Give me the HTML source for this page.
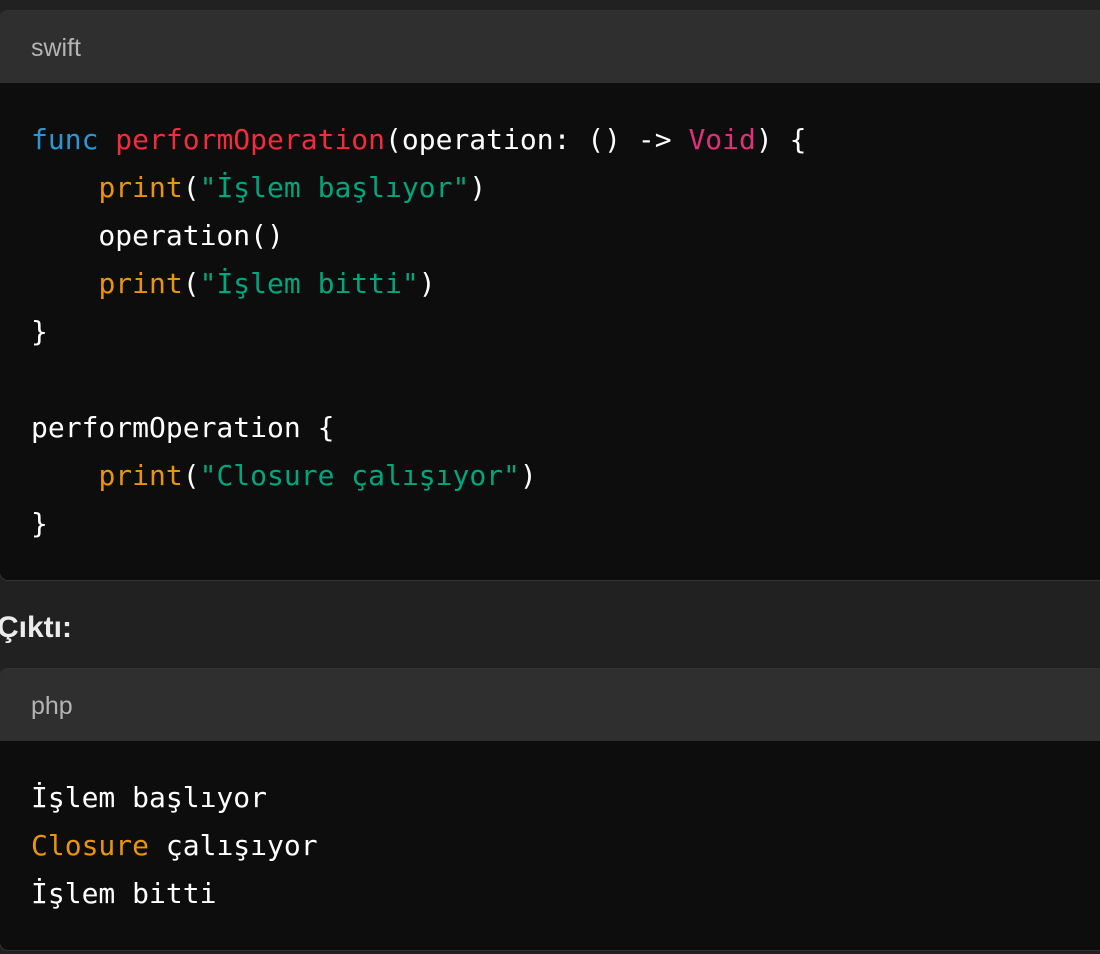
<!DOCTYPE html>
<html><head><meta charset="utf-8"><style>
html,body{margin:0;padding:0;background:#212121;width:1100px;height:954px;overflow:hidden;position:relative}
.blk{position:absolute;left:-1px;width:1120px;border-radius:9px;overflow:hidden;background:#0d0d0d;border:1px solid #333}
.hd{height:72px;background:#2f2f2f;color:#b4b4b4;font:25px "Liberation Sans",sans-serif;line-height:74px;padding-left:31px}
pre{margin:0;padding:33px 0 0 31px;font:28px/48px "DejaVu Sans Mono","Liberation Mono",monospace;color:#fff}
.k{color:#2e95d3}.f{color:#f22c3d}.t{color:#e9950c}.s{color:#00a67d}.v{color:#df3079}
h3{position:absolute;left:-3px;top:608px;margin:0;font:bold 30px/40px "Liberation Sans",sans-serif;color:#ececec}
</style></head><body>
<div class="blk" style="top:10px;height:569px">
<div class="hd">swift</div>
<pre><span class="k">func</span> <span class="f">performOperation</span>(operation: () -&gt; <span class="v">Void</span>) {
    <span class="t">print</span>(<span class="s">"İşlem başlıyor"</span>)
    operation()
    <span class="t">print</span>(<span class="s">"İşlem bitti"</span>)
}

performOperation {
    <span class="t">print</span>(<span class="s">"Closure çalışıyor"</span>)
}</pre>
</div>
<h3>Çıktı:</h3>
<div class="blk" style="top:668px;height:281px">
<div class="hd">php</div>
<pre>İşlem başlıyor
<span class="t">Closure</span> çalışıyor
İşlem bitti</pre>
</div>
</body></html>
